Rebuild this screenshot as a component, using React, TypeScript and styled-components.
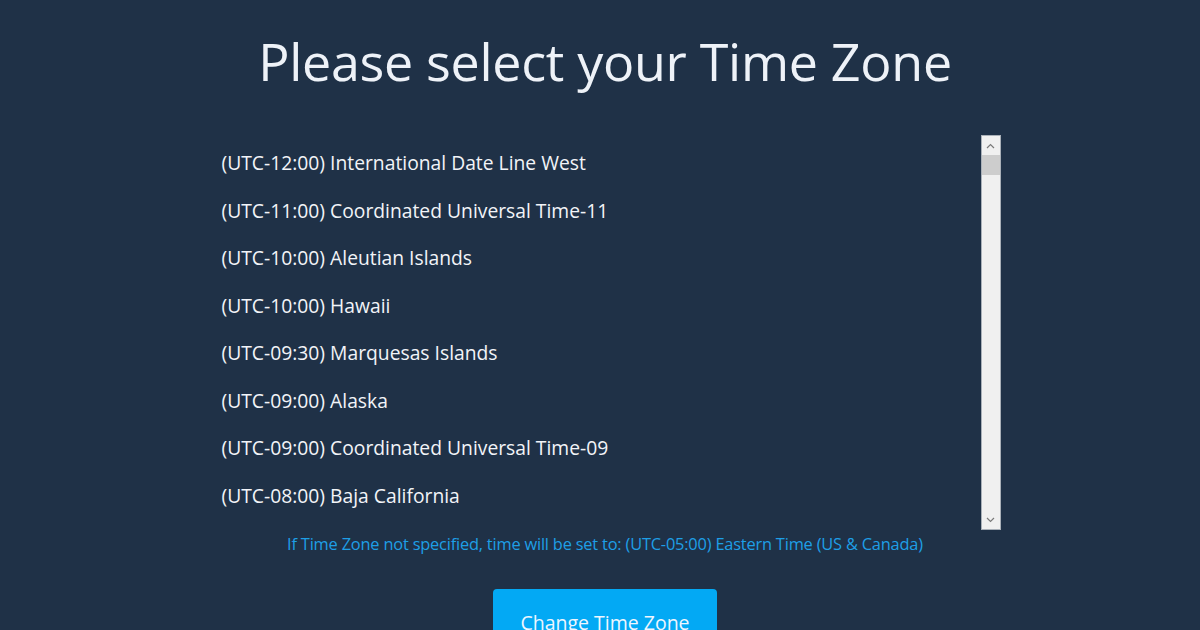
import React from "react";
import styled, { createGlobalStyle } from "styled-components";

const zones = [
  "(UTC-12:00) International Date Line West",
  "(UTC-11:00) Coordinated Universal Time-11",
  "(UTC-10:00) Aleutian Islands",
  "(UTC-10:00) Hawaii",
  "(UTC-09:30) Marquesas Islands",
  "(UTC-09:00) Alaska",
  "(UTC-09:00) Coordinated Universal Time-09",
  "(UTC-08:00) Baja California",
];

const GlobalStyle = createGlobalStyle`
  html, body {
    margin: 0;
    padding: 0;
    background: #1f3147;
    font-family: "Open Sans", "Noto Sans", sans-serif;
  }
`;

const Page = styled.div`
  width: 1200px;
  height: 630px;
  box-sizing: border-box;
  padding-left: 10px;
  overflow: hidden;
  display: flex;
  flex-direction: column;
  align-items: center;
  background: #1f3147;
`;

const Title = styled.h1`
  margin: 25px 0 0;
  font-size: 52px;
  font-weight: 400;
  line-height: 72px;
  color: #eef2f8;
  letter-spacing: -0.3px;
  white-space: nowrap;
  flex-shrink: 0;
`;

const ListBox = styled.div`
  margin: 38px 0 0;
  width: 791px;
  height: 395px;
  flex-shrink: 0;
  display: flex;
`;

const Items = styled.div`
  flex: 1;
  overflow: hidden;
  padding: 12px 0 0 12px;
`;

const Item = styled.div`
  height: 47.5px;
  font-size: 19.3px;
  line-height: 32px;
  color: #f2f4f8;
  white-space: nowrap;
`;

const Scrollbar = styled.div`
  width: 20px;
  display: flex;
  flex-direction: column;
  background: #f0f0f0;
  border: 1px solid #a9b0b8;
  box-sizing: border-box;
`;

const Arrow = styled.div`
  height: 19px;
  display: flex;
  align-items: center;
  justify-content: center;
  background: #f0f0f0;
`;

const Thumb = styled.div`
  height: 20px;
  background: #cdcdcd;
`;

const Track = styled.div`
  flex: 1;
`;

const Note = styled.p`
  margin: 2px 0 0;
  font-size: 16.4px;
  line-height: 24px;
  color: #1e9fe6;
  letter-spacing: -0.2px;
  white-space: nowrap;
  flex-shrink: 0;
`;

const Button = styled.button`
  margin-top: 33px;
  width: 224px;
  height: 60px;
  flex-shrink: 0;
  border: none;
  border-radius: 4px;
  background: #03a9f4;
  color: #eef6ff;
  font-family: inherit;
  font-size: 19.5px;
  padding-top: 8px;
`;

const Chevron: React.FC<{ down?: boolean }> = ({ down }) => (
  <svg width="9" height="6" viewBox="0 0 9 6">
    <path
      d={down ? "M1 1 L4.5 4.5 L8 1" : "M1 5 L4.5 1.5 L8 5"}
      fill="none"
      stroke="#7a7a7a"
      strokeWidth="1.2"
    />
  </svg>
);

export default function App() {
  return (
    <Page>
      <GlobalStyle />
      <Title>Please select your Time Zone</Title>
      <ListBox>
        <Items>
          {zones.map((z) => (
            <Item key={z}>{z}</Item>
          ))}
        </Items>
        <Scrollbar>
          <Arrow>
            <Chevron />
          </Arrow>
          <Thumb />
          <Track />
          <Arrow>
            <Chevron down />
          </Arrow>
        </Scrollbar>
      </ListBox>
      <Note>
        If Time Zone not specified, time will be set to: (UTC-05:00) Eastern Time (US &amp; Canada)
      </Note>
      <Button>Change Time Zone</Button>
    </Page>
  );
}
